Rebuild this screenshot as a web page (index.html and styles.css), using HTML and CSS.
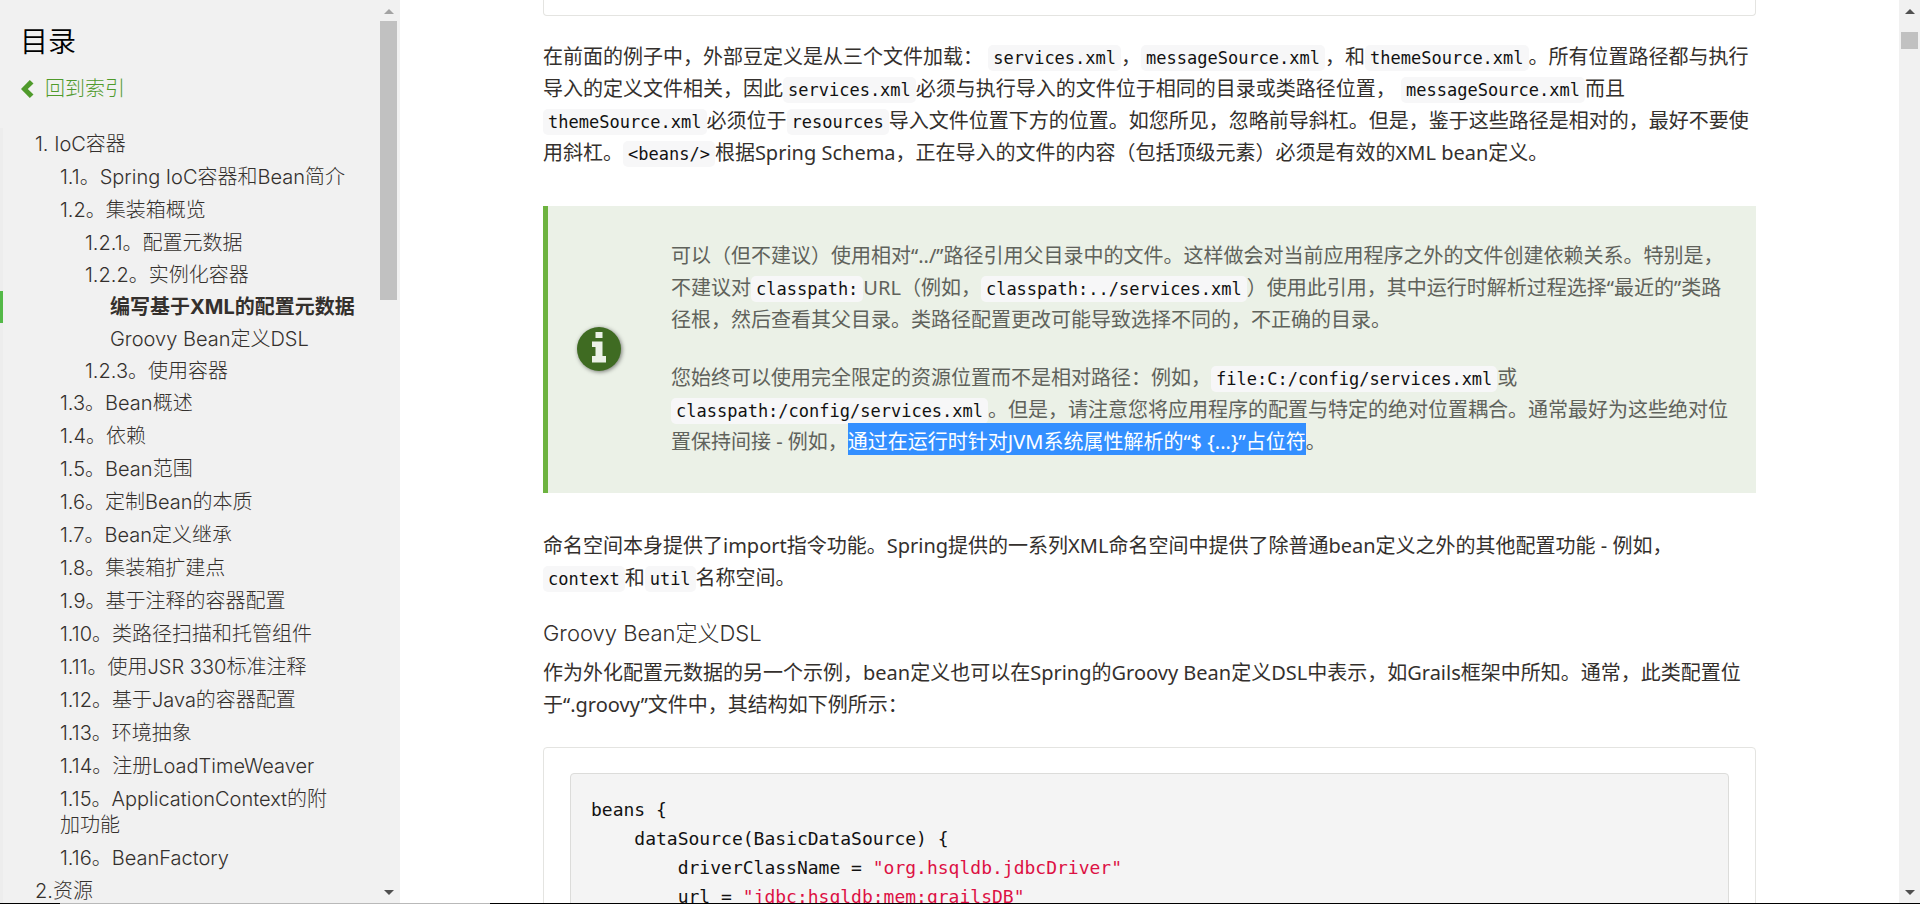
FILE: index.html
```html
<!DOCTYPE html>
<html lang="zh-CN">
<head>
    <meta charset="UTF-8">
    <meta name="viewport" content="width=device-width, initial-scale=1.0">
    <title>Core Technologies</title>
    <link rel="stylesheet" href="styles.css">
</head>
<body>
    <div class="page">
        <nav class="sidebar">
            <div class="toc">
                <h2 class="toc-title">目录</h2>
                <a href="#index" class="back-link">
                    <svg width="13" height="18" viewBox="0 0 13 18"><path d="M8.800 0L12.500 3.400L6.800 9L12.500 14.600L8.800 18L0 9Z" fill="#4f9a2b"/></svg>
                    回到索引
                </a>
                <ul class="toc-list level-1">
                    <li><a href="#beans">1. IoC容器</a>
                        <ul class="level-2">
                            <li><a href="#introduction">1.1。Spring IoC容器和Bean简介</a></li>
                            <li><a href="#basics">1.2。集装箱概览</a>
                                <ul class="level-3">
                                    <li><a href="#metadata">1.2.1。配置元数据</a></li>
                                    <li><a href="#instantiation">1.2.2。实例化容器</a>
                                        <ul class="level-4">
                                            <li><a href="#xml" class="active">编写基于XML的配置元数据</a></li>
                                            <li><a href="#groovy">Groovy Bean定义DSL</a></li>
                                        </ul>
                                    </li>
                                    <li><a href="#client">1.2.3。使用容器</a></li>
                                </ul>
                            </li>
                            <li><a href="#definition">1.3。Bean概述</a></li>
                            <li><a href="#dependencies">1.4。依赖</a></li>
                            <li><a href="#scopes">1.5。Bean范围</a></li>
                            <li><a href="#nature">1.6。定制Bean的本质</a></li>
                            <li><a href="#child">1.7。Bean定义继承</a></li>
                            <li><a href="#extension">1.8。集装箱扩建点</a></li>
                            <li><a href="#annotation">1.9。基于注释的容器配置</a></li>
                            <li><a href="#scanning">1.10。类路径扫描和托管组件</a></li>
                            <li><a href="#standard">1.11。使用JSR 330标准注释</a></li>
                            <li><a href="#java">1.12。基于Java的容器配置</a></li>
                            <li><a href="#environment">1.13。环境抽象</a></li>
                            <li><a href="#weaver">1.14。注册LoadTimeWeaver</a></li>
                            <li><a href="#context">1.15。ApplicationContext的附加功能</a></li>
                            <li><a href="#beanfactory">1.16。BeanFactory</a></li>
                        </ul>
                    </li>
                    <li><a href="#resources">2.资源</a></li>
                </ul>
            </div>
            <div class="scrollbar">
                <span class="arrow up muted"></span>
                <span class="thumb"></span>
                <span class="arrow down"></span>
            </div>
        </nav>

        <main class="content">
            <div class="block-end"></div>

            <p class="text">在前面的例子中，外部豆定义是从三个文件加载： <code>services.xml</code>，<code>messageSource.xml</code>，和<code>themeSource.xml</code>。所有位置路径都与执行导入的定义文件相关，因此<code>services.xml</code>必须与执行导入的文件位于相同的目录或类路径位置， <code>messageSource.xml</code>而且 <code>themeSource.xml</code>必须位于<code>resources</code>导入文件位置下方的位置。如您所见，忽略前导斜杠。但是，鉴于这些路径是相对的，最好不要使用斜杠。<code>&lt;beans/&gt;</code>根据Spring Schema，正在导入的文件的内容（包括顶级元素）必须是有效的XML bean定义。</p>

            <div class="note">
                <div class="note-icon">
                    <svg width="50" height="50" viewBox="0 0 50 50">
                        <circle cx="25" cy="25" r="22" fill="#3f6b22"/>
                        <path d="M21.500 8h7v6h-7zM18 17.500h10.500v14.500h3.500v6.500H18V32h3.500v-9H18z" fill="#ebf1e7"/>
                    </svg>
                </div>
                <div class="note-body">
                    <p>可以（但不建议）使用相对“../”路径引用父目录中的文件。这样做会对当前应用程序之外的文件创建依赖关系。特别是，不建议对<code>classpath:</code>URL（例如，<code>classpath:../services.xml</code>）使用此引用，其中运行时解析过程选择“最近的”类路径根，然后查看其父目录。类路径配置更改可能导致选择不同的，不正确的目录。</p>
                    <p>您始终可以使用完全限定的资源位置而不是相对路径：例如，<code>file:C:/config/services.xml</code>或 <code>classpath:/config/services.xml</code>。但是，请注意您将应用程序的配置与特定的绝对位置耦合。通常最好为这些绝对位置保持间接 - 例如，<mark>通过在运行时针对JVM系统属性解析的“$ {...}”占位符</mark>。</p>
                </div>
            </div>

            <p class="text">命名空间本身提供了import指令功能。Spring提供的一系列XML命名空间中提供了除普通bean定义之外的其他配置功能 - 例如， <code>context</code>和<code>util</code>名称空间。</p>

            <h5 class="section-title">Groovy Bean定义DSL</h5>
            <p class="text">作为外化配置元数据的另一个示例，bean定义也可以在Spring的Groovy Bean定义DSL中表示，如Grails框架中所知。通常，此类配置位于“.groovy”文件中，其结构如下例所示：</p>

            <div class="listing">
<pre>beans {
    dataSource(BasicDataSource) {
        driverClassName = <span class="string">"org.hsqldb.jdbcDriver"</span>
        url = <span class="string">"jdbc:hsqldb:mem:grailsDB"</span></pre>
            </div>
        </main>

        <div class="scrollbar page-scrollbar">
            <span class="arrow up"></span>
            <span class="thumb"></span>
            <span class="arrow down"></span>
        </div>
    </div>
    <div class="bottom-line"></div>
</body>
</html>
```
FILE: styles.css
```css
* {
    box-sizing: border-box;
}

body {
    margin: 0;
    height: 100vh;
    display: flex;
    flex-direction: column;
    overflow: hidden;
    background-color: #fff;
    color: #34302d;
    font-family: "Noto Sans", "Noto Sans CJK SC", sans-serif;
    font-size: 20px;
    line-height: 32px;
}

a {
    color: inherit;
    text-decoration: none;
}

.page {
    flex: 1;
    min-height: 0;
    display: flex;
}

/* Sidebar */
.sidebar {
    width: 400px;
    flex-shrink: 0;
    display: flex;
    overflow: hidden;
    padding-right: 3px;
    background-color: #f1f1f1;
    font-family: Inter, "Noto Sans CJK SC", sans-serif;
    font-weight: 300;
    line-height: 26px;
}

.toc {
    flex: 1;
}

.toc-title {
    margin: 24px 0 0 20px;
    color: #000;
    font-size: 28px;
    font-weight: 350;
    line-height: 36px;
}

.back-link {
    display: flex;
    align-items: center;
    gap: 11px;
    margin: 16px 0 0 21px;
    color: #4f9a2b;
}

.toc-list {
    margin-top: 26px;
    border-left: 3px solid #ededed;
}

.toc ul {
    list-style: none;
    margin-bottom: 0;
    padding: 0;
}

.toc li a {
    display: block;
    padding: 3px 34px 4px 32px;
}

.toc .level-2 a {
    padding-left: 57px;
}

.toc .level-3 a {
    padding-left: 82px;
    padding-bottom: 3px;
}

.toc .level-4 a {
    padding-left: 107px;
    padding-right: 0;
}

.toc li a.active {
    margin-left: -3px;
    border-left: 3px solid #54b948;
    font-weight: 700;
}

/* Scrollbars */
.scrollbar {
    width: 17px;
    flex-shrink: 0;
    display: flex;
    flex-direction: column;
    align-items: center;
    padding: 9px 0 8px;
    background-color: #f1f1f1;
}

.thumb {
    width: 17px;
    height: 279px;
    margin-top: 7px;
    background-color: #c1c1c1;
}

.arrow {
    border: 5px solid transparent;
}

.arrow.up {
    border-top: 0;
    border-bottom-color: #505050;
}

.arrow.muted {
    border-bottom-color: #a3a3a3;
}

.arrow.down {
    margin-top: auto;
    border-bottom: 0;
    border-top-color: #505050;
}

.page-scrollbar {
    width: 21px;
}

.page-scrollbar .thumb {
    height: 17px;
    margin-top: 18px;
}

/* Content */
.content {
    flex: 1;
    min-width: 0;
    overflow: hidden;
    padding: 0 143px;
}

.block-end {
    height: 16px;
    border: 1px solid #e4e4e1;
    border-top: 0;
    border-radius: 0 0 4px 4px;
}

.text {
    margin: 25px 0 0;
}

code {
    padding: 3px 5px;
    border-radius: 5px;
    background-color: #f7f7f8;
    color: #111;
    font-family: "DejaVu Sans Mono", monospace;
    font-size: 17px;
    line-height: 20px;
}

.note {
    display: flex;
    align-items: center;
    margin: 37px 0;
    padding: 34px 25px 35px 0;
    border-left: 5px solid #6db33f;
    background-color: #ebf1e7;
    color: #5f625b;
}

.note-icon {
    width: 123px;
    flex-shrink: 0;
    padding-left: 26px;
}

.note-icon svg {
    display: block;
    filter: drop-shadow(1px 1px 2px rgba(0, 0, 0, 0.5));
}

.note-body {
    flex: 1;
    min-width: 0;
}

.note-body p {
    margin: 0;
}

.note-body p + p {
    margin-top: 26px;
}

mark {
    padding-top: 5px;
    background-color: #338fff;
    color: #fff;
}

.section-title {
    margin: 23px 0 0;
    font-family: Inter, "Noto Sans CJK SC", sans-serif;
    font-size: 22px;
    font-weight: 300;
    line-height: 32px;
}

.section-title + .text {
    margin-top: 8px;
}

.listing {
    margin-top: 26px;
    padding: 25px 26px;
    border: 1px solid #e4e4e1;
    border-radius: 4px;
}

pre {
    margin: 0;
    padding: 21px 20px;
    border: 1px solid #dcdcda;
    border-radius: 4px;
    background-color: #f4f4f4;
    color: #111;
    font-family: "DejaVu Sans Mono", monospace;
    font-size: 18px;
    line-height: 29px;
}

.string {
    color: #dd1144;
}

/* Loading strip along the bottom edge */
.bottom-line {
    height: 1px;
    background: linear-gradient(to right, #000 60px, #b9b9b9 60px, #b9b9b9 490px, #000 490px);
}
```
